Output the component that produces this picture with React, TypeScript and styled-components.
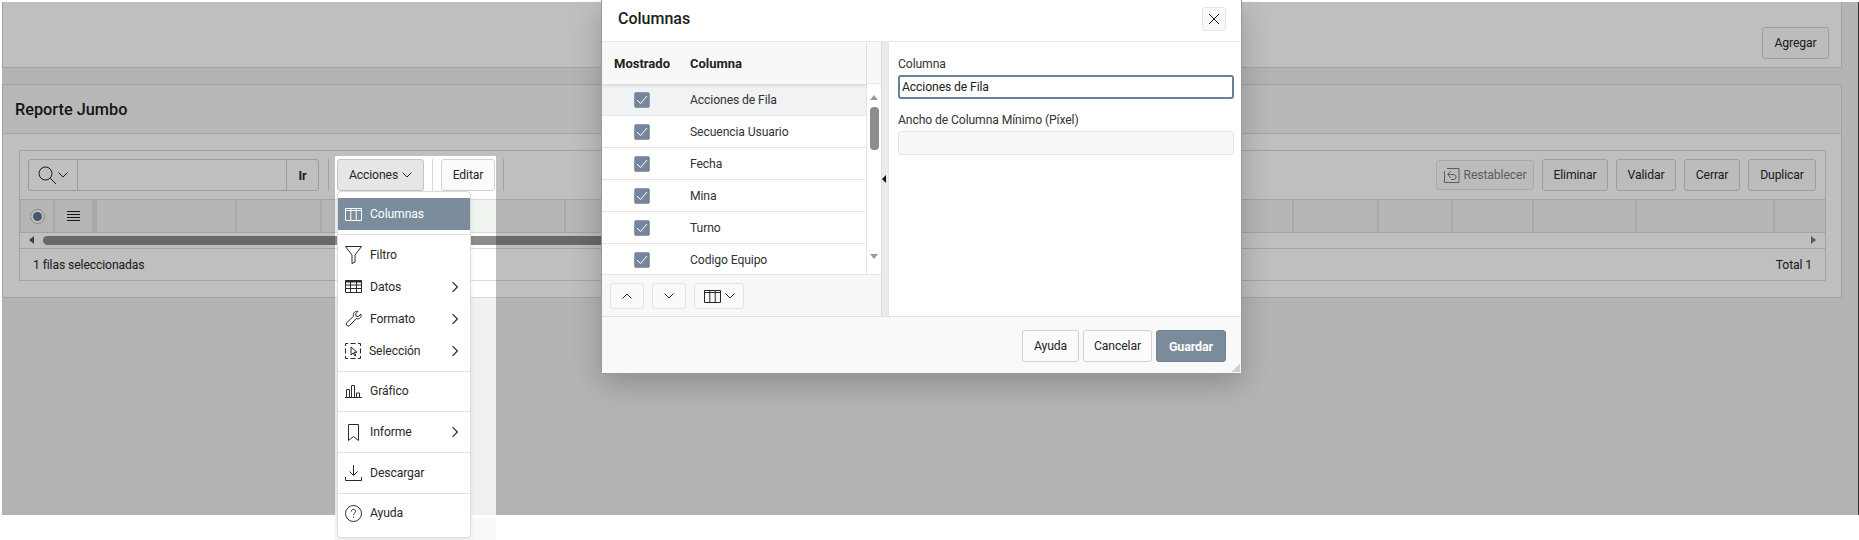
import React from "react";
import styled, { createGlobalStyle } from "styled-components";

const Global = createGlobalStyle`
  html, body { margin: 0; padding: 0; background: #fff; }
  body { font-family: Roboto, "Noto Sans", sans-serif; font-size: 12.2px; letter-spacing: -0.12px; color: #262626; overflow: hidden; }
`;

const Stage = styled.div`
  position: relative;
  width: 1859px;
  height: 540px;
  overflow: hidden;
  background: #fff;
`;

const Page = styled.div`
  box-sizing: border-box;
  width: 1857px;
  height: 513px;
  margin: 2px 0 0 2px;
  padding-right: 17px;
  background: #f1f1f1;
`;

const Panel = styled.section`
  box-sizing: border-box;
  border: 1px solid #d8d8d8;
  background: #fff;
`;

const TopPanel = styled(Panel)`
  height: 66px;
  display: flex;
  justify-content: flex-end;
  align-items: flex-start;
  padding: 25px 12px 0 0;
  border-top: 0;
`;

const ReportPanel = styled(Panel)`
  margin-top: 16px;
  height: 214px;
`;

const ReportHeader = styled.header`
  box-sizing: border-box;
  height: 49px;
  display: flex;
  align-items: center;
  padding-left: 12px;
  background: #f6f6f6;
  border-bottom: 1px solid #dcdcdc;
  font-size: 16.3px;
  letter-spacing: 0;
  font-weight: 500;
  color: #1c1c1c;
`;

const Grid = styled.div`
  box-sizing: border-box;
  margin: 16px 15px 0 16px;
  height: 131px;
  border: 1px solid #dadada;
  display: flex;
  flex-direction: column;
`;

const Toolbar = styled.div`
  height: 49px;
  flex: none;
  display: flex;
  align-items: center;
  padding: 0 8px;
  gap: 8px;
  border-bottom: 1px solid #dadada;
  box-sizing: border-box;
`;

const SearchGroup = styled.div`
  width: 291px;
  height: 32px;
  margin-right: 1px;
  box-sizing: border-box;
  border: 1px solid #d0d0d0;
  border-radius: 3px;
  display: flex;
  align-items: stretch;
  flex: none;
`;

const SearchPick = styled.div`
  width: 48px;
  display: flex;
  align-items: center;
  justify-content: center;
  gap: 1px;
  border-right: 1px solid #d0d0d0;
`;

const SearchField = styled.div`
  flex: 1;
`;

const Go = styled.div`
  width: 31px;
  display: flex;
  align-items: center;
  justify-content: center;
  border-left: 1px solid #d0d0d0;
  font-weight: 700;
  font-size: 12.5px;
`;

const ToolSep = styled.span`
  width: 1px;
  height: 32px;
  background: #d8d8d8;
  flex: none;
`;

const Btn = styled.button<{ $w?: number; $h?: number; $active?: boolean; $disabled?: boolean }>`
  box-sizing: border-box;
  width: ${(p) => (p.$w ? `${p.$w}px` : "auto")};
  height: ${(p) => p.$h ?? 32}px;
  display: inline-flex;
  align-items: center;
  justify-content: center;
  gap: 4px;
  padding: 0;
  flex: none;
  font: inherit;
  letter-spacing: inherit;
  color: ${(p) => (p.$disabled ? "#7c7c7c" : "#262626")};
  background: ${(p) => (p.$active ? "#e6e6e6" : "#fbfbfb")};
  border: 1px solid ${(p) => (p.$active ? "#c4c4c4" : p.$disabled ? "#e2e2e2" : "#d2d2d2")};
  border-radius: 3px;
`;

const Push = styled.div`
  flex: 1;
`;

const RightActions = styled.div`
  display: flex;
  align-items: center;
  gap: 8px;
  margin-right: 1px;
`;

const HeaderRow = styled.div`
  height: 33px;
  flex: none;
  display: flex;
  gap: 2px;
  padding: 0 0 0 1px;
  box-sizing: border-box;
  background: #e2e2e2;
  border-bottom: 1px solid #dadada;
`;

const HeadCell = styled.div<{ $w: number; $grow?: boolean; $frozen?: boolean }>`
  width: ${(p) => p.$w}px;
  flex: ${(p) => (p.$grow ? "1" : "none")};
  margin-right: ${(p) => (p.$frozen ? 3 : 0)}px;
  background: #f0f5f0;
  display: flex;
  align-items: center;
  justify-content: center;
`;

const Radio = styled.span`
  width: 15px;
  height: 15px;
  box-sizing: border-box;
  border: 1px solid #b5b5b5;
  border-radius: 50%;
  background: #fff;
  display: flex;
  align-items: center;
  justify-content: center;
  &::after {
    content: "";
    width: 9px;
    height: 9px;
    border-radius: 50%;
    background: #5f7690;
  }
`;

const ScrollRow = styled.div`
  height: 16px;
  flex: none;
  position: relative;
  border-bottom: 1px solid #dadada;
  box-sizing: border-box;
`;

const ScrollThumb = styled.span`
  position: absolute;
  left: 23px;
  top: 3px;
  width: 680px;
  height: 9px;
  border-radius: 5px;
  background: #8c8c8c;
`;

const ArrowL = styled.span`
  position: absolute;
  left: 9px;
  top: 3px;
  border: 4px solid transparent;
  border-left: 0;
  border-right: 5px solid #555;
`;

const ArrowR = styled.span`
  position: absolute;
  right: 9px;
  top: 3px;
  border: 4px solid transparent;
  border-right: 0;
  border-left: 5px solid #777;
`;

const GridFoot = styled.div`
  flex: 1;
  display: flex;
  align-items: center;
  justify-content: space-between;
  padding: 0 13px;
`;

const Dim = styled.div`
  position: absolute;
  left: 2px;
  top: 2px;
  width: 1857px;
  height: 513px;
  background: rgba(0, 0, 0, 0.25);
  clip-path: polygon(0 0, 100% 0, 100% 100%, 494px 100%, 494px 154px, 333px 154px, 333px 100%, 0 100%);
`;

const EdgeLine = styled.div`
  position: absolute;
  right: 0;
  top: 2px;
  width: 1px;
  height: 513px;
  background: #333;
`;

const LowerStrip = styled.div`
  position: absolute;
  left: 335px;
  top: 518px;
  width: 161px;
  height: 22px;
  background: #f9f9f9;
`;

const Menu = styled.div`
  position: absolute;
  left: 337px;
  top: 191px;
  width: 134px;
  box-sizing: border-box;
  height: 347px;
  padding-top: 6px;
  background: #fff;
  border: 1px solid #dcdcdc;
  border-radius: 4px;
  box-shadow: 0 2px 6px rgba(0, 0, 0, 0.08);
`;

const MenuItem = styled.div<{ $on?: boolean }>`
  height: 32px;
  display: flex;
  align-items: center;
  padding-left: 7px;
  gap: 8px;
  background: ${(p) => (p.$on ? "#7b8c9c" : "transparent")};
  color: ${(p) => (p.$on ? "#fff" : "#2a2a2a")};
`;

const MenuLabel = styled.span`
  flex: 1;
`;

const MenuChevron = styled.span`
  width: 21px;
  display: flex;
`;

const MenuSep = styled.div`
  height: 1px;
  background: #e2e2e2;
  margin: 4px 0 3.7px;
`;

const Dialog = styled.div`
  position: absolute;
  left: 601px;
  top: 0;
  width: 641px;
  height: 374px;
  display: flex;
  flex-direction: column;
  background: #fff;
  border: 1px solid #9a9a9a;
  border-top: 0;
  box-sizing: border-box;
  border-radius: 0 0 3px 3px;
  box-shadow: 0 10px 30px rgba(0, 0, 0, 0.22);
`;

const DialogTitle = styled.div`
  height: 42px;
  flex: none;
  box-sizing: border-box;
  display: flex;
  align-items: center;
  justify-content: space-between;
  padding: 0 15px 4px 16px;
  border-bottom: 1px solid #e6e6e6;
  font-size: 16px;
  letter-spacing: 0;
  font-weight: 500;
  color: #1c1c1c;
`;

const CloseBtn = styled(Btn)`
  background: #f9f9f9;
  border-color: #e4e4e4;
`;

const DialogBody = styled.div`
  flex: 1;
  display: flex;
  min-height: 0;
`;

const ListPane = styled.div`
  width: 279px;
  flex: none;
  display: flex;
  flex-direction: column;
`;

const ListTop = styled.div`
  display: flex;
  height: 232px;
  overflow: hidden;
`;

const ListCol = styled.div`
  width: 264px;
  flex: none;
  border-right: 1px solid #e4e4e4;
`;

const ListHead = styled.div`
  display: flex;
  align-items: center;
  height: 42px;
  background: #f8f8f8;
  font-weight: 700;
  font-size: 13px;
  letter-spacing: 0;
  color: #222;
  box-shadow: 0 2px 3px rgba(0, 0, 0, 0.1);
  position: relative;
`;

const ShownCell = styled.div`
  width: 80px;
  margin-right: 8px;
  flex: none;
  display: flex;
  justify-content: center;
`;

const Row = styled.div<{ $on?: boolean }>`
  display: flex;
  align-items: center;
  height: 32px;
  box-sizing: border-box;
  border-bottom: 1px solid #e6e6e6;
  background: ${(p) => (p.$on ? "#f0f2f4" : "#fff")};
  color: #333;
`;

const RowLabel = styled.span`
  padding-top: 1px;
`;

const Check = styled.span`
  width: 16px;
  height: 16px;
  display: flex;
  align-items: center;
  justify-content: center;
  border-radius: 2px;
  background: #74879a;
  border: 1px solid #8d9cab;
  box-sizing: border-box;
`;

const ListScroll = styled.div`
  flex: 1;
  position: relative;
  background: #fff;
`;

const ListHeadFill = styled.div`
  height: 42px;
  background: #f8f8f8;
  border-bottom: 1px solid #e6e6e6;
  box-sizing: border-box;
`;

const ListThumb = styled.span`
  position: absolute;
  left: 3px;
  top: 65px;
  width: 9px;
  height: 43px;
  background: #8d8d8d;
  border-radius: 4px;
`;

const TriUp = styled.span`
  position: absolute;
  left: 3px;
  top: 53px;
  border: 4.5px solid transparent;
  border-top: 0;
  border-bottom: 5px solid #9a9a9a;
`;

const TriDown = styled.span`
  position: absolute;
  left: 3px;
  bottom: 15px;
  border: 4.5px solid transparent;
  border-bottom: 0;
  border-top: 5px solid #9a9a9a;
`;

const ListTools = styled.div`
  flex: 1;
  display: flex;
  align-items: center;
  gap: 8px;
  padding: 0 0 0 8px;
  background: #f8f8f8;
  border-top: 1px solid #e6e6e6;
`;

const ToolBtn = styled(Btn)`
  background: #f9f9f9;
  border-color: #e4e4e4;
`;

const Splitter = styled.div`
  width: 8px;
  flex: none;
  position: relative;
  background: #ebebeb;
  border-left: 1px solid #dcdcdc;
  border-right: 1px solid #e4e4e4;
  box-sizing: border-box;
  &::after {
    content: "";
    position: absolute;
    left: 0;
    top: 133px;
    border: 4px solid transparent;
    border-left: 0;
    border-right: 4px solid #111;
  }
`;

const Form = styled.div`
  flex: 1;
  padding: 12px 7px 0 9px;
`;

const FieldLabel = styled.label<{ $second?: boolean }>`
  display: block;
  height: 21px;
  line-height: 20px;
  margin-top: ${(p) => (p.$second ? 11 : 0)}px;
  color: #333;
`;

const TextField = styled.div<{ $focus?: boolean }>`
  box-sizing: border-box;
  height: 24px;
  display: flex;
  align-items: center;
  padding-left: 2px;
  border-radius: 3px;
  border: ${(p) => (p.$focus ? "2px solid #6a8097" : "1px solid #e4e4e4")};
  background: ${(p) => (p.$focus ? "#fff" : "#f8f8f8")};
  color: #222;
`;

const DialogFoot = styled.div`
  height: 57px;
  flex: none;
  position: relative;
  display: flex;
  justify-content: flex-end;
  align-items: flex-start;
  gap: 4px;
  box-sizing: border-box;
  padding: 13px 15px 0 0;
  background: #f9f9f9;
  border-top: 1px solid #e0e0e0;
`;

const Primary = styled(Btn)`
  background: #7a8b9c;
  border-color: #6f8192;
  color: #fff;
  font-weight: 700;
  font-size: 12.5px;
`;

const Grip = styled.span`
  position: absolute;
  right: 1px;
  bottom: 1px;
  width: 8px;
  height: 8px;
  background: linear-gradient(135deg, transparent 50%, #d0d0d0 50%);
`;

const Icon = styled.svg`
  flex: none;
  fill: none;
  stroke: currentColor;
  stroke-width: 1;
  display: block;
`;

const CheckIcon = styled(Icon)`
  stroke: #fff;
`;

const Chevron = ({ up, right, size = 10 }: { up?: boolean; right?: boolean; size?: number }) => (
  <Icon width={size} height={size} viewBox="0 0 10 10">
    <path d={right ? "M3 1l4 4-4 4" : up ? "M.5 7.500l4.500-4.500 4.500 4.500" : "M.5 2.500l4.500 4.500 4.500-4.500"} />
  </Icon>
);

const ColumnsIcon = ({ w = 17 }: { w?: number }) => (
  <Icon width={w} height={14} viewBox="0 0 17 14">
    <path d="M.5 1.500h16v12H.5zM.5 3.500h16M5.800 1.500v12M11.200 1.500v12" />
  </Icon>
);

const SearchIcon = () => (
  <Icon width={19} height={19} viewBox="0 0 19 19">
    <circle cx="7.500" cy="7.500" r="6.500" />
    <path d="M12.300 12.300L18 18" />
  </Icon>
);

const FunnelIcon = () => (
  <Icon width={17} height={18} viewBox="0 0 17 18">
    <path d="M.5.5h16L10 9v7l-3 1.500V9z" />
  </Icon>
);

const TableIcon = () => (
  <Icon width={17} height={13} viewBox="0 0 17 13">
    <path d="M.5.5h16v12H.5z" />
    <path d="M.5 1.500h16" strokeWidth="2" />
    <path d="M.5 5h16M.5 8.500h16M5.500 1v12M11.500 1v12" />
  </Icon>
);

const WrenchIcon = () => (
  <Icon width={17} height={17} viewBox="0 0 17 17">
    <path d="M16 4.200c.4 1.800-.2 3.400-1.600 4.200-1 .6-2.200.6-3.200.2L4.600 15.500a1.900 1.900 0 0 1-2.800-.1 1.900 1.900 0 0 1 0-2.700L8.500 6.200c-.4-1.100-.3-2.300.4-3.300C9.800 1.500 11.400 1 13 1.400L10.500 4l.5 2 2 .6z" />
  </Icon>
);

const SelectIcon = () => (
  <Icon width={16} height={16} viewBox="0 0 16 16">
    <path d="M3 .5H.5V3M13 .5h2.500V3M3 15.500H.5V13M13 15.500h2.500V13M5.500.5h5M5.500 15.500h5M.5 5.500v5M15.500 5.500v5" />
    <path d="M6 4v8l2-2 2 3 1-.7-2-3h3z" />
  </Icon>
);

const ChartIcon = () => (
  <Icon width={17} height={13} viewBox="0 0 17 13">
    <path d="M0 12.500h17M1.500 12V4.500h3V12M6.500 12V.5h3V12M11.500 12V8h3v4" />
  </Icon>
);

const BookmarkIcon = () => (
  <Icon width={17} height={17} viewBox="0 0 17 17">
    <path d="M3.500.5h10v16l-5-4-5 4z" />
  </Icon>
);

const DownloadIcon = () => (
  <Icon width={17} height={16} viewBox="0 0 17 16">
    <path d="M8.500 0v10M4.500 6.500l4 4 4-4M.5 12v3.500h16V12" />
  </Icon>
);

const HelpIcon = () => (
  <Icon width={17} height={17} viewBox="0 0 17 17">
    <circle cx="8.500" cy="8.500" r="8" />
    <path d="M6.300 6.500c0-1.300 1-2.100 2.200-2.100s2.200.8 2.200 2c0 1.700-2.200 1.700-2.200 3.400" />
    <path d="M8.500 11.500v1.200" />
  </Icon>
);

const ListMenuIcon = () => (
  <Icon width={13} height={12} viewBox="0 0 13 12">
    <path d="M0 1.500h13M0 4.500h13M0 7.500h13M0 10.500h13" />
  </Icon>
);

const CloseIcon = () => (
  <Icon width={12} height={12} viewBox="0 0 12 12">
    <path d="M1 1l10 10M11 1L1 11" />
  </Icon>
);

const CheckMark = () => (
  <CheckIcon width={12} height={10} viewBox="0 0 12 10">
    <path d="M1 5l3.500 3.500L11 1" />
  </CheckIcon>
);

const ResetIcon = () => (
  <Icon width={16} height={15} viewBox="0 0 16 15">
    <path d="M3 .5h12v14H.5V3" />
    <path d="M7 3L3.500 6.500 7 10M3.500 6.500H9c2 0 3 1 3 2.500s-1 2.500-3 2.500H7" />
  </Icon>
);

const headCols = [138, 83, 242, 52, 98, 98, 98, 98, 98, 98, 72, 83, 72, 79, 101, 136, 40];

const rows = ["Acciones de Fila", "Secuencia Usuario", "Fecha", "Mina", "Turno", "Codigo Equipo"];

const menuData: { label: string; icon: React.ReactNode; sub?: boolean }[][] = [
  [
    { label: "Filtro", icon: <FunnelIcon /> },
    { label: "Datos", icon: <TableIcon />, sub: true },
    { label: "Formato", icon: <WrenchIcon />, sub: true },
    { label: "Selección", icon: <SelectIcon />, sub: true },
  ],
  [{ label: "Gráfico", icon: <ChartIcon /> }],
  [{ label: "Informe", icon: <BookmarkIcon />, sub: true }],
  [{ label: "Descargar", icon: <DownloadIcon /> }],
  [{ label: "Ayuda", icon: <HelpIcon /> }],
];

export default function App() {
  return (
    <Stage>
      <Global />
      <Page>
        <TopPanel>
          <Btn $w={67}>Agregar</Btn>
        </TopPanel>
        <ReportPanel>
          <ReportHeader>Reporte Jumbo</ReportHeader>
          <Grid>
            <Toolbar>
              <SearchGroup>
                <SearchPick>
                  <SearchIcon />
                  <Chevron />
                </SearchPick>
                <SearchField />
                <Go>Ir</Go>
              </SearchGroup>
              <ToolSep />
              <Btn $w={87} $active>
                Acciones <Chevron />
              </Btn>
              <ToolSep />
              <Btn $w={54}>Editar</Btn>
              <ToolSep />
              <Push />
              <RightActions>
                <Btn $w={98} $h={30} $disabled>
                  <ResetIcon /> Restablecer
                </Btn>
                <Btn $w={66}>Eliminar</Btn>
                <Btn $w={60}>Validar</Btn>
                <Btn $w={56}>Cerrar</Btn>
                <Btn $w={68}>Duplicar</Btn>
              </RightActions>
            </Toolbar>
            <HeaderRow>
              <HeadCell $w={32}>
                <Radio />
              </HeadCell>
              <HeadCell $w={37} $frozen>
                <ListMenuIcon />
              </HeadCell>
              {headCols.map((w, i) => (
                <HeadCell key={i} $w={w} $grow={i === headCols.length - 1} />
              ))}
            </HeaderRow>
            <ScrollRow>
              <ArrowL />
              <ScrollThumb />
              <ArrowR />
            </ScrollRow>
            <GridFoot>
              <span>1 filas seleccionadas</span>
              <span>Total 1</span>
            </GridFoot>
          </Grid>
        </ReportPanel>
      </Page>
      <Dim />
      <EdgeLine />
      <LowerStrip />
      <Menu>
        <MenuItem $on>
          <ColumnsIcon />
          <MenuLabel>Columnas</MenuLabel>
        </MenuItem>
        {menuData.map((group, g) => (
          <React.Fragment key={g}>
            <MenuSep />
            {group.map((it) => (
              <MenuItem key={it.label}>
                {it.icon}
                <MenuLabel>{it.label}</MenuLabel>
                {it.sub && (
                  <MenuChevron>
                    <Chevron right size={12} />
                  </MenuChevron>
                )}
              </MenuItem>
            ))}
          </React.Fragment>
        ))}
      </Menu>
      <Dialog>
        <DialogTitle>
          Columnas
          <CloseBtn $w={24} $h={24}>
            <CloseIcon />
          </CloseBtn>
        </DialogTitle>
        <DialogBody>
          <ListPane>
            <ListTop>
              <ListCol>
                <ListHead>
                  <ShownCell>Mostrado</ShownCell>
                  <span>Columna</span>
                </ListHead>
                {rows.map((r, i) => (
                  <Row key={r} $on={i === 0}>
                    <ShownCell>
                      <Check>
                        <CheckMark />
                      </Check>
                    </ShownCell>
                    <RowLabel>{r}</RowLabel>
                  </Row>
                ))}
              </ListCol>
              <ListScroll>
                <ListHeadFill />
                <TriUp />
                <ListThumb />
                <TriDown />
              </ListScroll>
            </ListTop>
            <ListTools>
              <ToolBtn $w={34} $h={26}>
                <Chevron up />
              </ToolBtn>
              <ToolBtn $w={34} $h={26}>
                <Chevron />
              </ToolBtn>
              <ToolBtn $w={50} $h={26}>
                <ColumnsIcon />
                <Chevron />
              </ToolBtn>
            </ListTools>
          </ListPane>
          <Splitter />
          <Form>
            <FieldLabel>Columna</FieldLabel>
            <TextField $focus>Acciones de Fila</TextField>
            <FieldLabel $second>Ancho de Columna Mínimo (Píxel)</FieldLabel>
            <TextField />
          </Form>
        </DialogBody>
        <DialogFoot>
          <Btn $w={57}>Ayuda</Btn>
          <Btn $w={69}>Cancelar</Btn>
          <Primary $w={70}>Guardar</Primary>
          <Grip />
        </DialogFoot>
      </Dialog>
    </Stage>
  );
}
